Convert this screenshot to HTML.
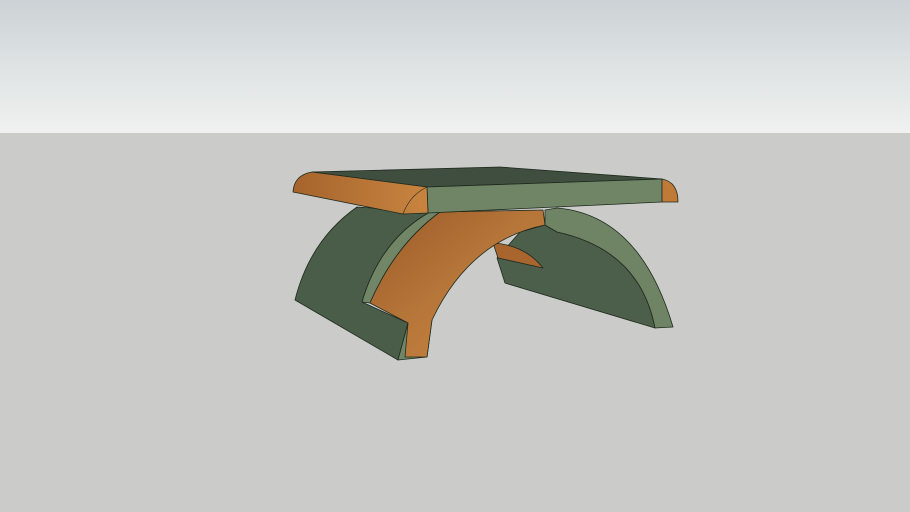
<!DOCTYPE html>
<html><head><style>
html,body{margin:0;padding:0;width:910px;height:512px;overflow:hidden}
body{background:#cbcbc9}
.sky{position:absolute;left:0;top:0;width:910px;height:133px;background:linear-gradient(#ccd2d5,#e2e6e6 60%,#f0f1f0)}
svg{position:absolute;left:0;top:0}
</style></head><body>
<div class="sky"></div>
<svg width="910" height="512" viewBox="0 0 910 512">
<defs>
<linearGradient id="wood" x1="0" y1="0" x2="1" y2="1">
<stop offset="0" stop-color="#9a5a28"/><stop offset="0.5" stop-color="#b8773a"/><stop offset="1" stop-color="#c98640"/>
</linearGradient>
<linearGradient id="wood2" x1="0" y1="0" x2="1" y2="0">
<stop offset="0" stop-color="#a6642d"/><stop offset="1" stop-color="#c8843f"/>
</linearGradient>
</defs>
<g stroke="#1e2a1e" stroke-width="0.8" stroke-linejoin="round">
<!-- right arch inner dark face -->
<path d="M497 258 L505 283 L655 328 Q640 250 557 232 L545 225 L520 232 Z" fill="#4c5f4a"/>
<!-- right arch green band -->
<path d="M545 210 L557 208 Q640 215 673 327 L655 328 Q640 250 557 232 L545 225 Z" fill="#6e8465"/>
<!-- small wood wedge -->
<path d="M493 243 Q525 245 543 268 L498 258 Z" fill="#a8652e"/>
<!-- left arch outer dark green -->
<path d="M357 207 L430 212 Q380 240 362 302 L408 323 L398 360 L295 300 Q310 240 357 207 Z" fill="#4a5d48"/>
<!-- left arch thin green edge -->
<path d="M430 212 L440 212 Q395 245 370 303 L362 302 Q380 240 430 212 Z" fill="#708667"/>
<path d="M408 323 L432 320 L427 357 L398 360 Z" fill="#708667"/>
<!-- wood arch -->
<path d="M440 212 L543 210 L545 225 Q470 240 432 320 L427 357 L405 357 L408 323 L370 303 Q395 245 440 212 Z" fill="url(#wood)"/>
<!-- slab top -->
<path d="M312 172 L500 167 L662 179 L427 187 Z" fill="#3f4e3f"/>
<!-- slab front green -->
<path d="M427 187 L662 179 L662 202 L428 213 Z" fill="#6f8566"/>
<!-- left wood end -->
<path d="M293 192 Q294 175 312 172 L427 187 L428 213 L403 214 Z" fill="url(#wood2)"/>
<path d="M427 187 Q410 195 403 214" fill="none" stroke-width="0.6"/>
<!-- right end cap -->
<path d="M662 179 Q678 182 678 202 L662 202 Z" fill="#c07a38"/>
</g>
</svg>
</body></html>
